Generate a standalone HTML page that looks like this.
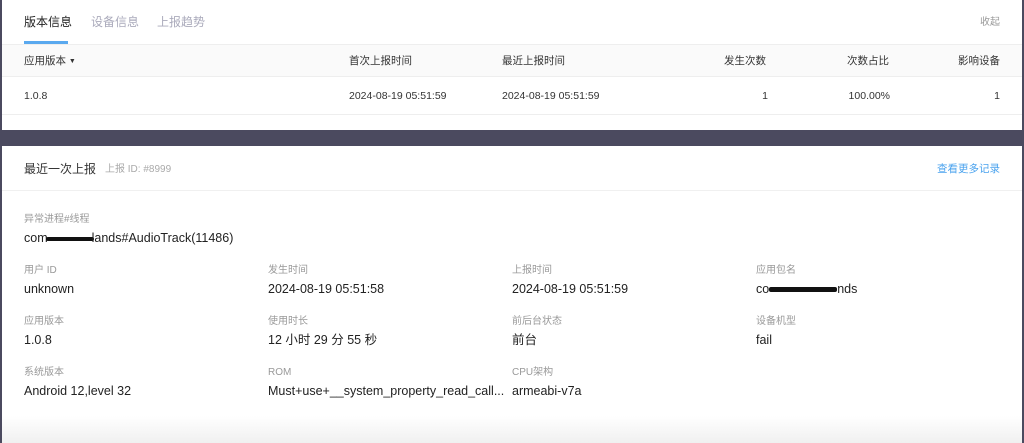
<!DOCTYPE html>
<html><head><meta charset="utf-8"><style>
*{margin:0;padding:0;box-sizing:border-box}
body{width:1024px;height:443px;overflow:hidden;background:#4b4a5f;font-family:"Liberation Sans","Noto Sans CJK SC",sans-serif;position:relative;color:#333}
.card{position:absolute;left:2px;width:1020px;background:#fff}
.a{position:absolute;white-space:nowrap;line-height:1}
.t{font-size:10.5px;color:#333}
.l{font-size:10px;color:#999}
.v{font-size:12.5px;color:#222}
</style></head><body>
<div class="card" style="top:0;height:130px">
  <div class="a" style="left:22px;top:16px;font-size:12px;color:#222">版本信息</div>
  <div class="a" style="left:89px;top:16px;font-size:12px;color:#aab">设备信息</div>
  <div class="a" style="left:155px;top:16px;font-size:12px;color:#aab">上报趋势</div>
  <div class="a" style="left:978px;top:18px;font-size:10px;color:#999">收起</div>
  <div class="a" style="left:22px;top:41px;width:44px;height:3px;background:#5aa9ef"></div>
  <div class="a" style="left:0;top:44px;width:1020px;height:33px;background:#fafafa;border-top:1px solid #eee;border-bottom:1px solid #eee"></div>
  <div class="a t" style="left:22px;top:56px">应用版本 <span style="font-size:7px;vertical-align:1px">▼</span></div>
  <div class="a t" style="left:347px;top:56px">首次上报时间</div>
  <div class="a t" style="left:500px;top:56px">最近上报时间</div>
  <div class="a t" style="right:256px;top:56px">发生次数</div>
  <div class="a t" style="right:133px;top:56px">次数占比</div>
  <div class="a t" style="right:22px;top:56px">影响设备</div>
  <div class="a t" style="left:22px;top:91px">1.0.8</div>
  <div class="a t" style="left:347px;top:91px">2024-08-19 05:51:59</div>
  <div class="a t" style="left:500px;top:91px">2024-08-19 05:51:59</div>
  <div class="a t" style="right:254px;top:91px">1</div>
  <div class="a t" style="right:132px;top:91px">100.00%</div>
  <div class="a t" style="right:22px;top:91px">1</div>
  <div class="a" style="left:0;top:114px;width:1020px;height:1px;background:#eee"></div>
</div>
<div class="card" style="top:146px;height:297px;background:linear-gradient(#fff 0,#fff 270px,#f0f0f0 297px)">
  <div class="a" style="left:22px;top:17px;font-size:12px;color:#333">最近一次上报</div>
  <div class="a" style="left:103px;top:19px;font-size:10px;color:#aaa">上报 ID: #8999</div>
  <div class="a" style="right:22px;top:18px;font-size:10.5px;color:#4ba3ee">查看更多记录</div>
  <div class="a" style="left:0;top:44px;width:1020px;height:1px;background:#f0f0f0"></div>
  <div class="a l" style="left:22px;top:69px">异常进程#线程</div>
  <div class="a v" style="left:22px;top:86px">com<span style="display:inline-block;width:48px;height:4px;background:#111;vertical-align:middle;border-radius:2px;margin:0 -2px"></span>lands#AudioTrack(11486)</div>

  <div class="a l" style="left:22px;top:120px">用户 ID</div>
  <div class="a v" style="left:22px;top:137px">unknown</div>
  <div class="a l" style="left:266px;top:120px">发生时间</div>
  <div class="a v" style="left:266px;top:137px">2024-08-19 05:51:58</div>
  <div class="a l" style="left:510px;top:120px">上报时间</div>
  <div class="a v" style="left:510px;top:137px">2024-08-19 05:51:59</div>
  <div class="a l" style="left:754px;top:120px">应用包名</div>
  <div class="a v" style="left:754px;top:137px">co<span style="display:inline-block;width:68px;height:5px;background:#111;vertical-align:middle;border-radius:2px"></span>nds</div>

  <div class="a l" style="left:22px;top:171px">应用版本</div>
  <div class="a v" style="left:22px;top:188px">1.0.8</div>
  <div class="a l" style="left:266px;top:171px">使用时长</div>
  <div class="a v" style="left:266px;top:188px">12 小时 29 分 55 秒</div>
  <div class="a l" style="left:510px;top:171px">前后台状态</div>
  <div class="a v" style="left:510px;top:188px">前台</div>
  <div class="a l" style="left:754px;top:171px">设备机型</div>
  <div class="a v" style="left:754px;top:188px">fail</div>

  <div class="a l" style="left:22px;top:222px">系统版本</div>
  <div class="a v" style="left:22px;top:239px">Android 12,level 32</div>
  <div class="a l" style="left:266px;top:222px">ROM</div>
  <div class="a v" style="left:266px;top:239px">Must+use+__system_property_read_call...</div>
  <div class="a l" style="left:510px;top:222px">CPU架构</div>
  <div class="a v" style="left:510px;top:239px">armeabi-v7a</div>
</div>
</body></html>
